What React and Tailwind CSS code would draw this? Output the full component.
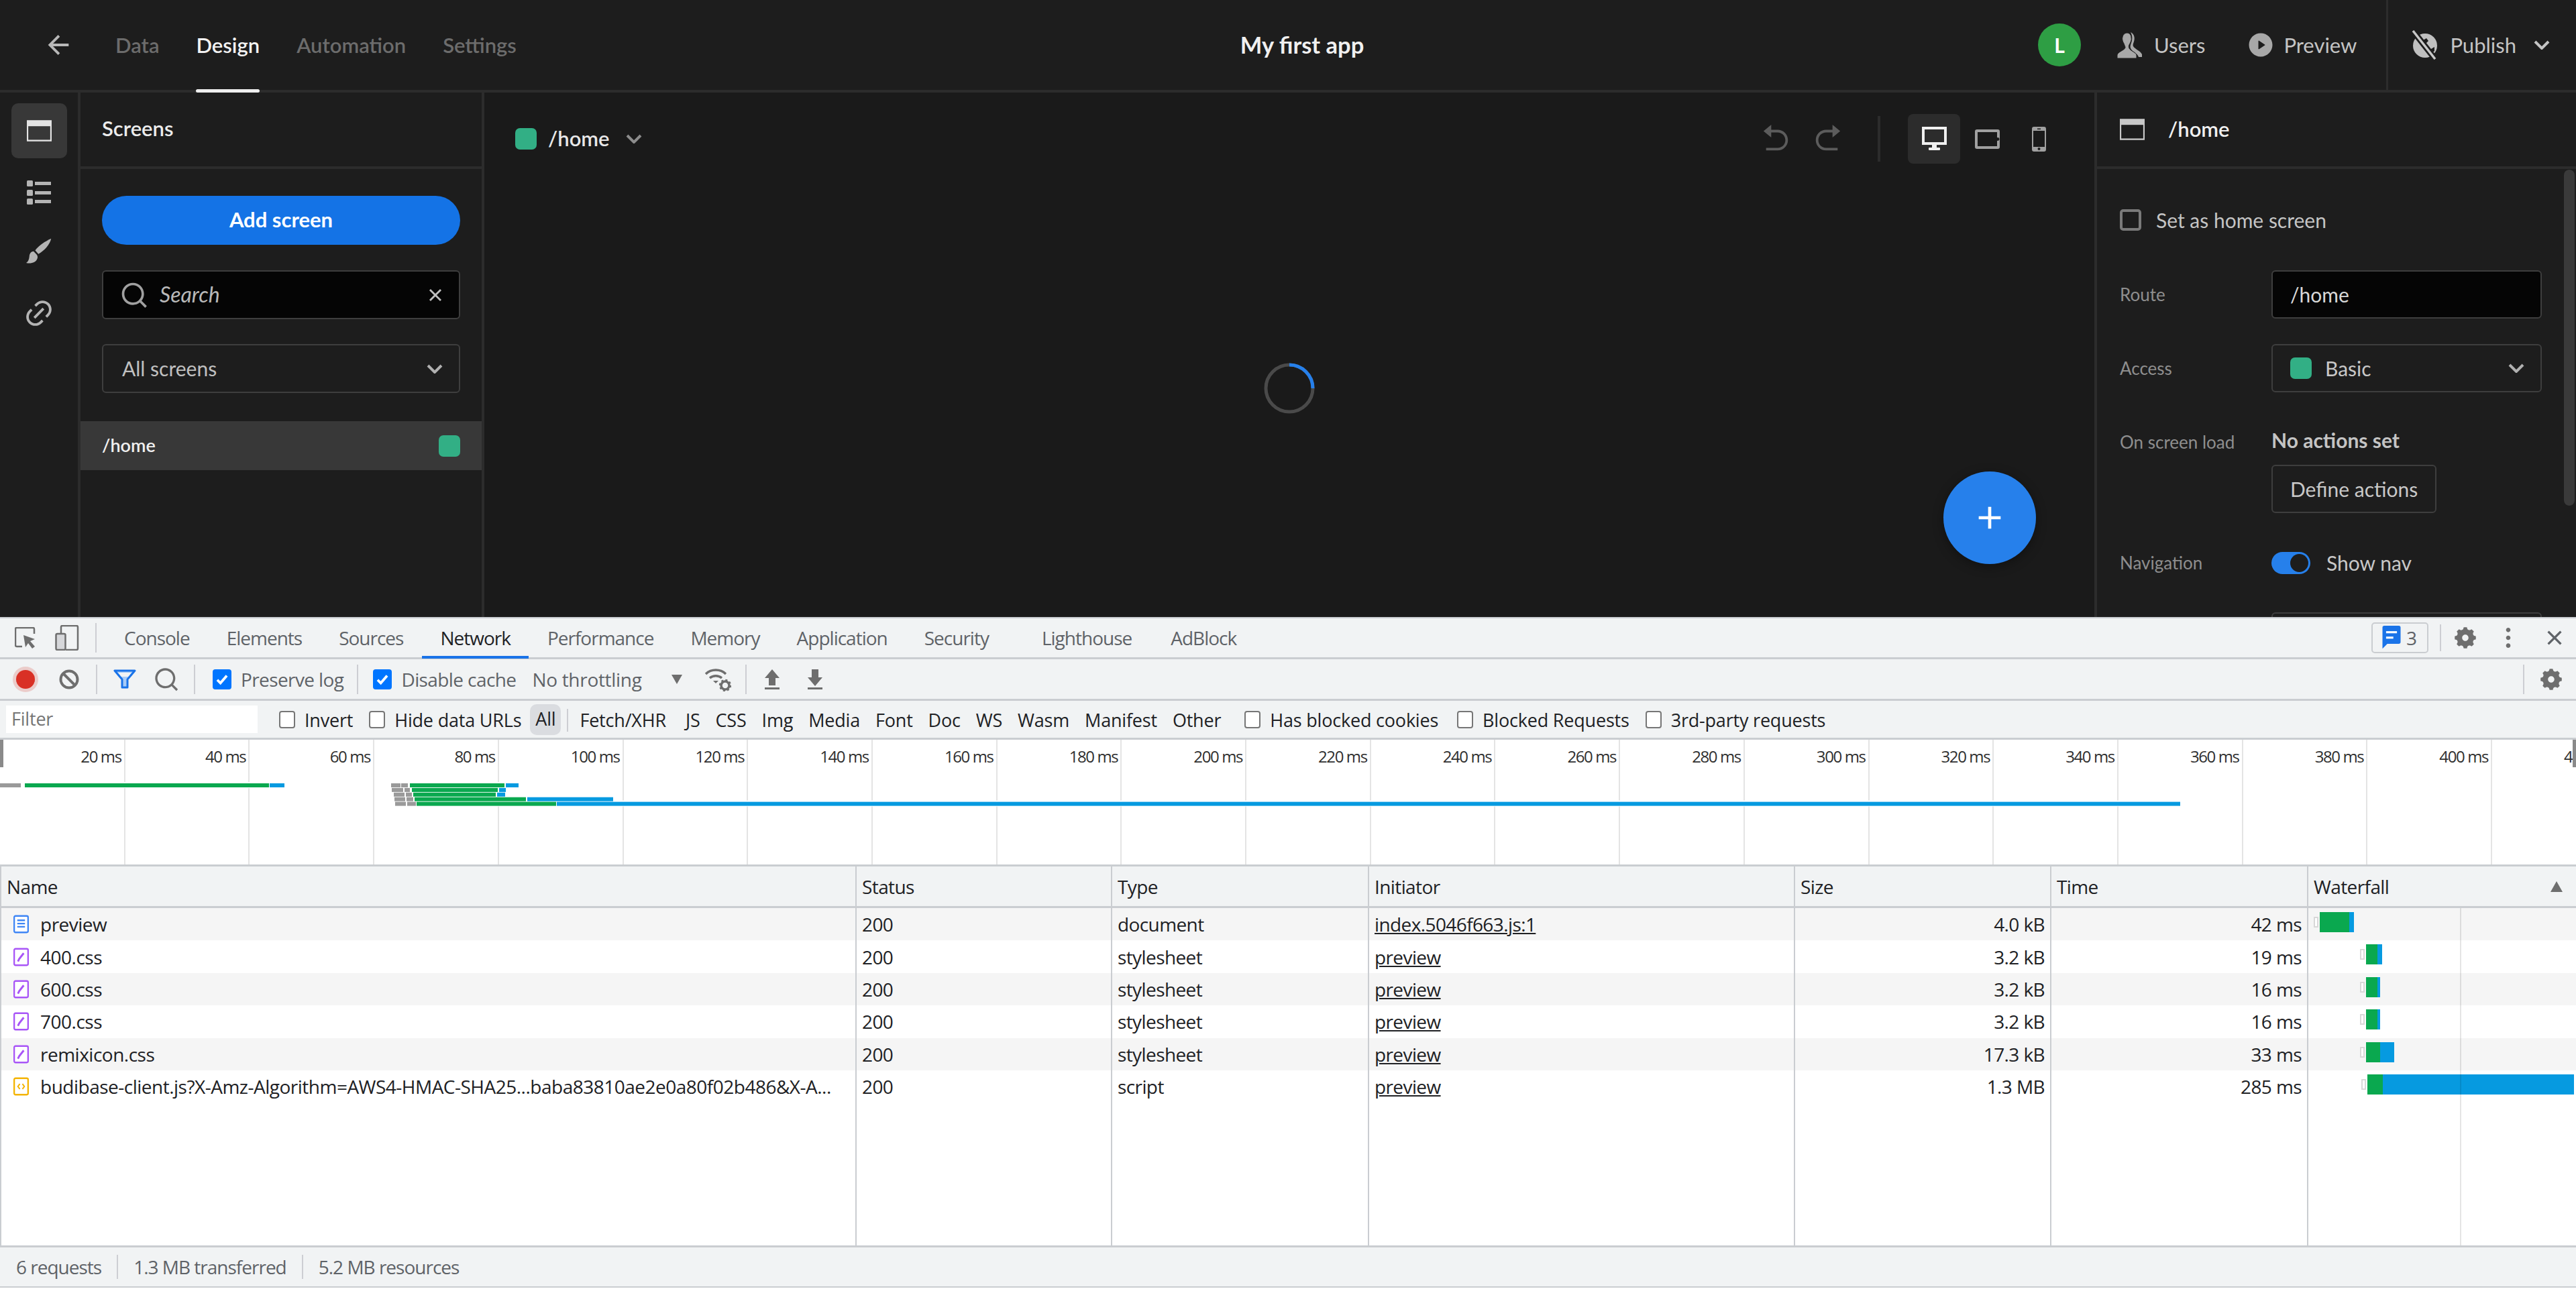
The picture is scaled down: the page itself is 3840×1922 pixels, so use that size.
import React from "react";
import {
  RiArrowLeftLine,
  RiLink,
  RiSearchLine,
  RiCloseFill,
  RiCloseLine,
  RiPlayCircleFill,
  RiArrowGoBackFill,
  RiArrowGoForwardFill,
  RiAddLine,
  RiSettings5Fill,
  RiMore2Fill,
} from "react-icons/ri";

const ticks = Array.from({ length: 21 }, (_, i) => (i + 1) * 20);

const rows = [
  { name: "preview", type: "document", initiator: "index.5046f663.js:1", size: "4.0 kB", time: "42 ms", kind: "doc", left: 17, green: 44, blue: 7 },
  { name: "400.css", type: "stylesheet", initiator: "preview", size: "3.2 kB", time: "19 ms", kind: "css", left: 86, green: 17, blue: 7 },
  { name: "600.css", type: "stylesheet", initiator: "preview", size: "3.2 kB", time: "16 ms", kind: "css", left: 86, green: 17, blue: 4 },
  { name: "700.css", type: "stylesheet", initiator: "preview", size: "3.2 kB", time: "16 ms", kind: "css", left: 86, green: 17, blue: 4 },
  { name: "remixicon.css", type: "stylesheet", initiator: "preview", size: "17.3 kB", time: "33 ms", kind: "css", left: 86, green: 21, blue: 21 },
  { name: "budibase-client.js?X-Amz-Algorithm=AWS4-HMAC-SHA25...baba83810ae2e0a80f02b486&X-A...", type: "script", initiator: "preview", size: "1.3 MB", time: "285 ms", kind: "js", left: 88, green: 23, blue: 285 },
];

const Dot = ({ className = "" }) => <div className={`w-[32px] h-[32px] bg-[#32af85] rounded-[7px] shrink-0 ${className}`} />;

const Chevron = ({ className = "", color = "#b0b0b0" }) => (
  <svg viewBox="0 0 24 14" className={`w-[24px] h-[14px] shrink-0 ${className}`} fill="none" stroke={color} strokeWidth="4">
    <path d="M2 2l10 10L22 2" />
  </svg>
);

const WindowIcon = ({ color, className = "" }) => (
  <svg viewBox="0 0 38 32" className={`w-[37px] h-[32px] shrink-0 ${className}`} fill="none">
    <rect x="1" y="1" width="36" height="30" stroke={color} strokeWidth="2.4" />
    <rect x="1" y="1" width="36" height="8" fill={color} />
  </svg>
);

const ListIcon = () => (
  <svg viewBox="0 0 36 36" className="w-[36px] h-[36px]" fill="#b4b4b4">
    <rect x="0" y="0" width="9" height="9" rx="1.5" />
    <rect x="12" y="2" width="24" height="5" />
    <rect x="0" y="14" width="9" height="9" rx="1.5" />
    <rect x="12" y="16" width="24" height="5" />
    <rect x="0" y="27" width="9" height="9" rx="1.5" />
    <rect x="12" y="29" width="24" height="5" />
  </svg>
);

const BrushIcon = () => (
  <svg viewBox="0 0 24 24" className="w-[38px] h-[38px]" fill="#b4b4b4">
    <path d="M23.5 0.5C22.5 6 17 12 11.5 15L8.5 11.5C12 7 18 3 23.5 0.5Z" />
    <path d="M7 12.5C4.2 12.7 3.2 15 3 17.2C2.8 20 1.8 22.4 0 23.4C4 24.4 9.4 23.4 10.6 19C11 17.4 10.5 16.2 10 15.6Z" />
  </svg>
);

const UsersIcon = () => (
  <svg viewBox="0 0 38 40" className="w-[38px] h-[40px] mr-[17px] shrink-0">
    <path d="M20 1c5 2 7 8 5 14-1 3-2 5-1 7 2 4 11 7 13 12v4h-5c-1-5-10-8-12-13-1-3 0-5 1-8 2-5 2-11-1-16z" fill="#a8a8a8" />
    <path d="M0 40v-5c1-5 11-7 12-11 0-2-1-3-2-6-2-3-3-7-2-10 1-4 4-6 7-6s6 3 6 7c1 3-1 7-2 9-2 3-2 5-1 7 2 4 10 6 11 10v5z" fill="#a8a8a8" stroke="#1d1d1d" strokeWidth="1" />
  </svg>
);

const PublishIcon = () => (
  <svg viewBox="0 0 40 44" className="w-[40px] h-[44px] mr-[18px] shrink-0">
    <circle cx="21" cy="23" r="18" fill="#c0c0c0" />
    <path d="M12 12l6 3 5-3 3 4-4 4-7-1zM30 28l5-3v6l-5 4z" fill="#1d1d1d" />
    <path d="M3 1L36 43" stroke="#1d1d1d" strokeWidth="9" />
    <path d="M3 1L36 43" stroke="#c8c8c8" strokeWidth="3.5" />
  </svg>
);

const Tab = ({ label, active }) => (
  <div className={`relative h-full flex items-center text-[31px] font-semibold ${active ? "text-[#f2f2f2]" : "text-[#6c6c6c]"}`}>
    {label}
    {active && <div className="absolute left-0 right-0 bottom-[-4px] h-[5px] bg-[#eeeeee] rounded-sm" />}
  </div>
);

const TopBar = () => (
  <div className="h-[138px] shrink-0 flex items-stretch border-b-[4px] border-[#2c2c2c] bg-[#1d1d1d]">
    <div className="w-[1741px] shrink-0 flex items-center pl-[64px]">
      <RiArrowLeftLine className="w-[46px] h-[46px] text-[#b8b8b8] mr-[62px]" />
      <div className="flex h-full gap-[55px]">
        <Tab label="Data" />
        <Tab label="Design" active />
        <Tab label="Automation" />
        <Tab label="Settings" />
      </div>
    </div>
    <div className="w-[400px] shrink-0 flex items-center justify-center text-[34.5px] font-bold text-[#f0f0f0]">My first app</div>
    <div className="flex-1 flex items-center justify-end">
      <div className="w-[64px] h-[64px] rounded-full bg-[#2e9e44] text-white text-[30px] font-bold flex items-center justify-center mr-[54px]">L</div>
      <UsersIcon />
      <span className="text-[31px] text-[#c4c4c4] mr-[62px]">Users</span>
      <RiPlayCircleFill className="w-[42px] h-[42px] text-[#a8a8a8] mr-[13px]" />
      <span className="text-[31px] text-[#c4c4c4] mr-[44px]">Preview</span>
      <div className="h-full w-[3px] bg-[#2c2c2c] mr-[34px]" />
      <PublishIcon />
      <span className="text-[31px] text-[#c4c4c4] mr-[26px]">Publish</span>
      <Chevron className="mr-[39px]" color="#c4c4c4" />
    </div>
  </div>
);

const IconRail = () => (
  <div className="w-[120px] shrink-0 border-r-[4px] border-[#2c2c2c] bg-[#1d1d1d] flex flex-col items-center pt-[16px]">
    <div className="w-[83px] h-[82px] rounded-[10px] bg-[#383838] flex items-center justify-center">
      <WindowIcon color="#e4e4e4" />
    </div>
    <div className="mt-[33px]"><ListIcon /></div>
    <div className="mt-[50px]"><BrushIcon /></div>
    <RiLink className="w-[46px] h-[46px] text-[#b4b4b4] mt-[51px]" />
  </div>
);

const ScreensPanel = () => (
  <div className="w-[602px] shrink-0 border-r-[4px] border-[#2c2c2c] bg-[#1d1d1d] flex flex-col">
    <div className="h-[114px] shrink-0 flex items-center px-[32px] pb-[3px] text-[31px] font-semibold text-[#ececec] border-b-[4px] border-[#2c2c2c]">Screens</div>
    <div className="px-[32px] pt-[40px] flex flex-col">
      <div className="h-[73px] pb-[2px] rounded-full bg-[#1473e6] text-white text-[31px] font-bold flex items-center justify-center">Add screen</div>
      <div className="h-[73px] mt-[38px] rounded-[6px] border-[2px] border-[#3e3e3e] bg-[#050505] flex items-center pl-[24px] pr-[18px]">
        <RiSearchLine className="w-[44px] h-[44px] text-[#a0a0a0] mr-[16px]" />
        <span className="flex-1 text-[32px] pb-[2px] italic text-[#b8b8b8]">Search</span>
        <RiCloseFill className="w-[34px] h-[34px] text-[#c0c0c0]" />
      </div>
      <div className="h-[73px] mt-[37px] rounded-[6px] border-[2px] border-[#3e3e3e] flex items-center justify-between pl-[28px] pr-[24px]">
        <span className="text-[30px] text-[#c0c0c0]">All screens</span>
        <Chevron />
      </div>
    </div>
    <div className="h-[73px] mt-[42px] bg-[#383838] flex items-center justify-between px-[32px]">
      <span className="text-[27px] font-semibold text-[#f0f0f0]">/home</span>
      <Dot />
    </div>
  </div>
);

const Canvas = () => (
  <div className="relative flex-1 bg-[#1a1a1a]">
    <div className="flex items-center justify-between pl-[46px] pr-[72px] pt-[32px]">
      <div className="flex items-center">
        <Dot />
        <span className="text-[31px] pb-[2px] text-[#e8e8e8] font-semibold ml-[17px] mr-[24px]">/home</span>
        <Chevron color="#8c8c8c" />
      </div>
      <div className="flex items-center h-[74px]">
        <RiArrowGoBackFill className="w-[46px] h-[46px] text-[#5c5c5c] mr-[30px]" />
        <RiArrowGoForwardFill className="w-[46px] h-[46px] text-[#5c5c5c] mr-[52px]" />
        <div className="w-[4px] h-[68px] bg-[#2c2c2c] mr-[41px]" />
        <div className="w-[78px] h-[74px] rounded-[8px] bg-[#2c2c2c] flex items-center justify-center">
          <svg viewBox="0 0 37 36" className="w-[37px] h-[36px]" fill="none">
            <rect x="2" y="2" width="33" height="23" stroke="#f0f0f0" strokeWidth="4" />
            <rect x="15" y="26" width="7" height="6" fill="#f0f0f0" />
            <rect x="10" y="31" width="17" height="4" rx="1" fill="#f0f0f0" />
          </svg>
        </div>
        <svg viewBox="0 0 37 29" className="w-[37px] h-[29px] ml-[22px]">
          <rect x="2" y="2" width="33" height="25" rx="1" fill="none" stroke="#a0a0a0" strokeWidth="4" />
          <circle cx="34" cy="14.5" r="2.4" fill="#1a1a1a" />
        </svg>
        <svg viewBox="0 0 21 37" className="w-[21px] h-[37px] ml-[48px]">
          <rect x="1" y="1" width="19" height="35" rx="2" fill="none" stroke="#a0a0a0" strokeWidth="2" />
          <rect x="1" y="1" width="19" height="5" fill="#a0a0a0" />
          <rect x="1" y="30" width="19" height="6" fill="#a0a0a0" />
          <circle cx="10.5" cy="33" r="2" fill="#1a1a1a" />
          <rect x="8" y="2.5" width="5" height="1.5" fill="#1a1a1a" />
        </svg>
      </div>
    </div>
    <div className="flex justify-center mt-[295px]">
      <svg viewBox="0 0 80 80" className="w-[80px] h-[80px]" fill="none" strokeWidth="5">
        <circle cx="40" cy="40" r="35" stroke="#4a4a4a" />
        <path d="M40 5a35 35 0 0 1 35 35" stroke="#2680eb" />
      </svg>
    </div>
    <div className="absolute left-[2175px] top-[565px] w-[138px] h-[138px] rounded-full bg-[#2680eb] flex items-center justify-center shadow-[0_4px_16px_rgba(0,0,0,0.35)]">
      <RiAddLine className="w-[56px] h-[56px] text-white" />
    </div>
  </div>
);

const FieldRow = ({ label, children, className = "" }) => (
  <div className={`flex items-center ${className}`}>
    <div className="w-[226px] shrink-0 text-[26px] text-[#8e8e8e]">{label}</div>
    {children}
  </div>
);

const PropsPanel = () => (
  <div className="relative w-[718px] shrink-0 border-l-[4px] border-[#2c2c2c] bg-[#1d1d1d] flex flex-col overflow-hidden">
    <div className="h-[114px] shrink-0 flex items-center px-[34px] border-b-[4px] border-[#2c2c2c]">
      <WindowIcon color="#c8c8c8" className="mr-[35px]" />
      <span className="text-[31px] pb-[2px] font-semibold text-[#f0f0f0]">/home</span>
    </div>
    <div className="pl-[34px] pr-[51px] pt-[48px] flex flex-col">
      <div className="flex items-center h-[56px]">
        <div className="w-[32px] h-[32px] rounded-[5px] border-[4px] border-[#7a7a7a] mr-[22px]" />
        <span className="text-[30px] text-[#c4c4c4]">Set as home screen</span>
      </div>
      <FieldRow label="Route" className="mt-[47px]">
        <div className="flex-1 h-[72px] rounded-[6px] border-[2px] border-[#3e3e3e] bg-[#050505] flex items-center px-[26px] text-[30px] text-[#d8d8d8]">/home</div>
      </FieldRow>
      <FieldRow label="Access" className="mt-[38px]">
        <div className="flex-1 h-[72px] rounded-[6px] border-[2px] border-[#3e3e3e] flex items-center pl-[26px] pr-[24px]">
          <Dot className="mr-[20px]" />
          <span className="flex-1 text-[30px] text-[#c8c8c8]">Basic</span>
          <Chevron />
        </div>
      </FieldRow>
      <div className="flex mt-[49px]">
        <div className="w-[226px] shrink-0 text-[26px] text-[#8e8e8e] pt-[6px]">On screen load</div>
        <div className="flex flex-col items-start">
          <span className="text-[30px] font-bold text-[#c4c4c4]">No actions set</span>
          <div className="mt-[14px] h-[72px] rounded-[6px] border-[2px] border-[#3e3e3e] flex items-center px-[26px] text-[30px] text-[#c8c8c8]">Define actions</div>
        </div>
      </div>
      <FieldRow label="Navigation" className="mt-[52px]">
        <div className="relative w-[58px] h-[33px] rounded-full bg-[#2680eb] mr-[24px]">
          <div className="absolute right-[3px] top-[3px] w-[27px] h-[27px] rounded-full bg-[#1d1d1d]" />
        </div>
        <span className="text-[30px] text-[#c8c8c8]">Show nav</span>
      </FieldRow>
      <div className="mt-[51px] h-[70px] rounded-[6px] border-[2px] border-[#3e3e3e] ml-[226px] shrink-0" />
    </div>
    <div className="absolute right-[2px] top-[115px] h-[501px] w-[16px] rounded-full bg-[#3a3a3a]" />
  </div>
);

const DevIcon = ({ children, w = 32, h = 40, className = "" }) => (
  <svg viewBox={`0 0 ${w} ${h}`} style={{ width: w, height: h }} className={`shrink-0 ${className}`}>
    {children}
  </svg>
);

const VBar = ({ className = "" }) => <div className={`w-[2px] h-[44px] bg-[#cdced3] shrink-0 ${className}`} />;

const DevTab = ({ label, active, className = "" }) => (
  <div className={`relative h-full flex items-center ${active ? "text-[#202124]" : "text-[#5f6368]"} ${className}`}>
    {label}
    {active && <div className="absolute left-[-27px] right-[-27px] bottom-[-2px] h-[4px] bg-[#1a73e8]" />}
  </div>
);

const Check = ({ checked, className = "" }) =>
  checked ? (
    <div className={`w-[28px] h-[30px] rounded-[4px] bg-[#0075ff] flex items-center justify-center shrink-0 ${className}`}>
      <svg viewBox="0 0 14 14" className="w-[22px] h-[22px]" fill="none" stroke="white" strokeWidth="2.4"><path d="M2.5 7.5l3 3 6-7" /></svg>
    </div>
  ) : (
    <div className={`w-[24px] h-[26px] rounded-[4px] border-[2px] border-[#767676] bg-white shrink-0 ${className}`} />
  );

const Gear = ({ className = "" }) => <RiSettings5Fill className={`w-[38px] h-[38px] text-[#6e6e6e] shrink-0 ${className}`} />;

const DevToolbar = () => (
  <div className="h-[61px] shrink-0 flex items-center bg-[#f1f3f4] border-b-[3px] border-[#cacdd1] text-[28px] tracking-[-1px] pl-[22px]">
    <DevIcon w={32} h={32}>
      <path d="M11 29H3q-2 0-2-2V3q0-2 2-2h24q2 0 2 2v7" fill="none" stroke="#6e6e6e" strokeWidth="2.5" />
      <path d="M13 12l17 6-7 3 7 8-4 3-6-8-4 6z" fill="#6e6e6e" />
    </DevIcon>
    <DevIcon w={36} h={38} className="ml-[28px]">
      <path d="M9 12V3q0-2 2-2h21q2 0 2 2v32q0 2-2 2H16" fill="none" stroke="#6e6e6e" strokeWidth="2.5" />
      <rect x="1.5" y="13" width="14" height="24" rx="2" fill="#d6d7da" stroke="#6e6e6e" strokeWidth="2.5" />
    </DevIcon>
    <VBar className="ml-[24px]" />
    <div className="flex h-full items-center gap-[55px] ml-[41px]">
      <DevTab label="Console" />
      <DevTab label="Elements" />
      <DevTab label="Sources" />
      <DevTab label="Network" active />
      <DevTab label="Performance" />
      <DevTab label="Memory" />
      <DevTab label="Application" />
      <DevTab label="Security" />
      <DevTab label="Lighthouse" className="ml-[24px]" />
      <DevTab label="AdBlock" className="ml-[3px]" />
    </div>
    <div className="flex-1" />
    <div className="h-[46px] w-[85px] rounded-[5px] border-[2px] border-[#cacdd1] flex items-center pl-[14px] text-[#5f6368]">
      <svg viewBox="0 0 30 40" className="w-[28px] h-[36px] mr-[8px]">
        <path d="M3 0h24q3 0 3 3v24q0 3-3 3H8l-8 8V3q0-3 3-3z" fill="#1a73e8" />
        <rect x="6" y="9" width="18" height="3.5" fill="#fff" />
        <rect x="6" y="18" width="12" height="3.5" fill="#fff" />
      </svg>
      3
    </div>
    <div className="w-[2px] h-[40px] bg-[#cdced3] mx-[17px]" />
    <Gear />
    <RiMore2Fill className="w-[40px] h-[40px] text-[#6e6e6e] ml-[25px]" />
    <RiCloseLine className="w-[40px] h-[40px] text-[#5f6368] ml-[29px] mr-[12px]" />
  </div>
);

const NetToolbar = () => (
  <div className="h-[62px] shrink-0 flex items-center bg-[#f1f3f4] border-b-[3px] border-[#cacdd1] text-[28px] tracking-[-0.6px] text-[#5f6368] pl-[24px]">
    <div className="w-[28px] h-[28px] rounded-full bg-[#d93025] shadow-[0_0_0_5px_rgba(217,48,37,0.2)]" />
    <DevIcon w={30} h={30} className="ml-[36px]">
      <circle cx="15" cy="15" r="12.5" fill="none" stroke="#6e6e6e" strokeWidth="4" />
      <path d="M7 7l16 16" stroke="#6e6e6e" strokeWidth="4" />
    </DevIcon>
    <VBar className="ml-[25px]" />
    <DevIcon w={34} h={30} className="ml-[24px]">
      <path d="M2 2h30L21 15v12h-8V15z" fill="#a9ccf7" stroke="#1a73e8" strokeWidth="3" strokeLinejoin="round" />
      <path d="M7 5h20l-5 6H12z" fill="#f1f3f4" />
    </DevIcon>
    <RiSearchLine className="w-[40px] h-[40px] text-[#6e6e6e] ml-[25px] shrink-0" />
    <VBar className="ml-[21px]" />
    <Check checked className="ml-[26px]" />
    <span className="ml-[14px]">Preserve log</span>
    <VBar className="ml-[20px]" />
    <Check checked className="ml-[22px]" />
    <span className="ml-[14px]">Disable cache</span>
    <span className="ml-[24px] tracking-[-0.3px]">No throttling</span>
    <div className="w-0 h-0 ml-[44px] border-l-[8px] border-r-[8px] border-t-[14px] border-l-transparent border-r-transparent border-t-[#6e6e6e]" />
    <DevIcon w={40} h={36} className="ml-[33px]">
      <path d="M2 10a22 22 0 0 1 30 0M8 16a14 14 0 0 1 18 0" fill="none" stroke="#6e6e6e" strokeWidth="3.5" />
      <path d="M13 20h8l-4 4z" fill="#6e6e6e" />
      <circle cx="31" cy="27" r="6" fill="none" stroke="#6e6e6e" strokeWidth="3.5" />
      <circle cx="31" cy="27" r="8" fill="none" stroke="#6e6e6e" strokeWidth="2.4" strokeDasharray="3 3.3" />
    </DevIcon>
    <VBar className="ml-[21px]" />
    <DevIcon w={26} h={32} className="ml-[25px]">
      <path d="M13 1l11 13h-6v11H8V14H2z M2 28h22v3H2z" fill="#6e6e6e" />
    </DevIcon>
    <DevIcon w={26} h={32} className="ml-[38px]">
      <path d="M13 26L2 13h6V1h10v12h6z M2 28h22v3H2z" fill="#6e6e6e" />
    </DevIcon>
    <div className="flex-1" />
    <VBar />
    <Gear className="ml-[21px] mr-[18px]" />
  </div>
);

const FilterBar = () => (
  <div className="h-[58px] shrink-0 flex items-center bg-[#f1f3f4] border-b-[3px] border-[#cacdd1] text-[27px] tracking-[-0.2px] text-[#202124] pl-[9px] pt-[3px]">
    <div className="w-[375px] h-[41px] -mt-[3px] bg-white flex items-center pl-[8px] text-[#757575] shrink-0">Filter</div>
    <Check className="ml-[32px] -mt-[3px]" />
    <span className="ml-[14px]">Invert</span>
    <Check className="ml-[24px] -mt-[3px]" />
    <span className="ml-[14px]">Hide data URLs</span>
    <div className="ml-[13px] px-[8px] h-[46px] -mt-[3px] rounded-[10px] bg-[#dadce0] flex items-center">All</div>
    <div className="w-[2px] h-[34px] bg-[#cdced3] ml-[9px]" />
    <div className="flex items-center gap-[23px] ml-[17px]">
      {["Fetch/XHR", "JS", "CSS", "Img", "Media", "Font", "Doc", "WS", "Wasm", "Manifest", "Other"].map((t) => (
        <span key={t} className={t === "JS" ? "ml-[6px]" : ""}>{t}</span>
      ))}
    </div>
    <Check className="ml-[35px] -mt-[3px]" />
    <span className="ml-[14px]">Has blocked cookies</span>
    <Check className="ml-[28px] -mt-[3px]" />
    <span className="ml-[14px]">Blocked Requests</span>
    <Check className="ml-[24px] -mt-[3px]" />
    <span className="ml-[14px]">3rd-party requests</span>
  </div>
);

// overview chart: [x, row, width, color], pixels
const overviewBars = [
  [0, 0, 31, "#9a9a9a"], [37, 0, 364, "#0aa84f"], [402, 0, 22, "#069ae0"],
  [583, 0, 14, "#9a9a9a"], [598, 0, 10, "#9a9a9a"], [611, 0, 141, "#0aa84f"], [754, 0, 19, "#069ae0"],
  [584, 1, 17, "#9a9a9a"], [603, 1, 8, "#9a9a9a"], [614, 1, 128, "#0aa84f"], [744, 1, 10, "#069ae0"],
  [587, 2, 16, "#9a9a9a"], [605, 2, 9, "#9a9a9a"], [616, 2, 123, "#0aa84f"], [741, 2, 12, "#069ae0"],
  [588, 3, 16, "#9a9a9a"], [606, 3, 10, "#9a9a9a"], [618, 3, 166, "#0aa84f"], [786, 3, 128, "#069ae0"],
  [589, 4, 16, "#9a9a9a"], [607, 4, 13, "#9a9a9a"], [621, 4, 208, "#0aa84f"], [830, 4, 2420, "#069ae0"],
];

const Overview = () => (
  <div className="relative h-[189px] shrink-0 bg-white border-b-[3px] border-[#cacdd1] overflow-hidden">
    {ticks.map((t, i) => (
      <div
        key={t}
        className="absolute top-0 bottom-0 w-[2px] bg-[#e4e4e4]"
        style={{ left: (i + 1) * 185.7 - 1 }}
      >
        <span className="absolute right-[6px] top-[7px] text-[24px] tracking-[-1.4px] text-[#303030] whitespace-nowrap">{t} ms</span>
      </div>
    ))}
    <div className="absolute left-0 top-0 w-[5px] h-[41px] bg-[#8a8a8a]" />
    <div className="absolute right-0 top-0 w-[5px] h-[41px] bg-[#8a8a8a]" />
    <svg className="absolute left-0 top-[60px] w-[3840px] h-[60px]" viewBox="0 0 3840 60">
      {overviewBars.map(([x, row, w], i) => (
        <rect key={i} x={x - 1} y={row * 6.9 + 3} width={w + 2} height={9} fill="#ffffff" />
      ))}
      {overviewBars.map(([x, row, w, c], i) => (
        <rect key={i} x={x} y={row * 6.9 + 5} width={w} height={6} fill={c} />
      ))}
    </svg>
  </div>
);

const cols = "grid grid-cols-[1273px_381px_383px_635px_382px_383px_1fr]";
const cell = "border-l-[2px] border-[#cacdd1] px-[8px] flex items-center overflow-hidden whitespace-nowrap";

const FileIcon = ({ kind }) => {
  const color = kind === "doc" ? "#3f86f5" : kind === "css" ? "#a855f7" : "#f4b400";
  return (
    <svg viewBox="0 0 24 28" className="w-[23px] h-[28px] mr-[17px] shrink-0">
      <rect x="1.2" y="1.2" width="21.6" height="25.6" rx="2" fill="#fff" stroke={color} strokeWidth="2.4" />
      {kind === "doc" && <path d="M6 8h12M6 13h12M6 18h12" stroke={color} strokeWidth="2.4" />}
      {kind === "css" && <path d="M7 21l2-4 7-9" stroke={color} strokeWidth="3" fill="none" />}
      {kind === "js" && <path d="M10 10l-3 4 3 4M14 10l3 4-3 4" stroke={color} strokeWidth="2" fill="none" />}
    </svg>
  );
};

const Table = () => (
  <div className="flex-1 flex flex-col bg-white min-h-0 relative text-[28px] tracking-[-0.6px] text-[#202124] border-l-[2px] border-[#cacdd1]">
    <div className={`${cols} h-[62px] shrink-0 bg-[#f1f3f4] border-b-[3px] border-[#cacdd1]`}>
      <div className="px-[8px] flex items-center">Name</div>
      {["Status", "Type", "Initiator", "Size", "Time"].map((h) => (
        <div key={h} className={cell}>{h}</div>
      ))}
      <div className={`${cell} justify-between pr-[20px]`}>
        Waterfall
        <div className="w-0 h-0 border-l-[9px] border-r-[9px] border-b-[16px] border-l-transparent border-r-transparent border-b-[#6e6e6e]" />
      </div>
    </div>
    <div className="flex-1 flex flex-col">
      {rows.map((r, i) => (
        <div key={r.name} className={`${cols} h-[48.4px] shrink-0 ${i % 2 === 0 ? "bg-[#f5f5f5]" : "bg-white"}`}>
          <div className="pl-[18px] pr-[8px] flex items-center overflow-hidden whitespace-nowrap">
            <FileIcon kind={r.kind} />
            <span className="tracking-[-0.5px]">{r.name}</span>
          </div>
          <div className={cell}>200</div>
          <div className={cell}>{r.type}</div>
          <div className={`${cell} underline`}>{r.initiator}</div>
          <div className={`${cell} justify-end`}>{r.size}</div>
          <div className={`${cell} justify-end`}>{r.time}</div>
          <div className="border-l-[2px] border-[#cacdd1] relative overflow-hidden">
            <div className="absolute top-[13px] h-[16px] w-[7px] border-[2px] border-[#d8d8d8] bg-white" style={{ left: r.left - 9 }} />
            <div className="absolute top-[6px] h-[30px] flex" style={{ left: r.left }}>
              <div className="bg-[#0aa84f]" style={{ width: r.green }} />
              <div className="bg-[#069ae0]" style={{ width: r.blue }} />
            </div>
          </div>
        </div>
      ))}
      <div className={`${cols} flex-1`}>
        {[0, 1, 2, 3, 4, 5].map((c) => <div key={c} className={c === 0 ? "" : "border-l-[2px] border-[#cacdd1]"} />)}
        <div className="border-l-[2px] border-[#cacdd1]" />
      </div>
    </div>
    <div className="absolute left-[3665px] top-[62px] bottom-0 w-[2px] bg-black/10" />
  </div>
);

const StatusBar = () => (
  <div className="h-[63px] shrink-0 mb-[2px] flex items-center bg-[#f1f3f4] border-t-[3px] border-b-[2px] border-[#cacdd1] text-[28px] tracking-[-1px] text-[#5f6368] pl-[24px]">
    <span>6 requests</span>
    <div className="w-[2px] h-[36px] bg-[#cdced3] mx-[23px]" />
    <span>1.3 MB transferred</span>
    <div className="w-[2px] h-[36px] bg-[#cdced3] mx-[23px]" />
    <span>5.2 MB resources</span>
  </div>
);

const App = () => {
  return (
    <div className="w-[3840px] h-[1922px] flex flex-col overflow-hidden bg-white">
      <div className="h-[920px] shrink-0 flex flex-col bg-[#1d1d1d] overflow-hidden font-['Lato','Noto_Sans',sans-serif]">
        <TopBar />
        <div className="flex-1 flex min-h-0">
          <IconRail />
          <ScreensPanel />
          <Canvas />
          <PropsPanel />
        </div>
      </div>
      <div className="flex-1 flex flex-col min-h-0 border-t-[2px] border-[#cacdd1] font-['Open_Sans','Noto_Sans',sans-serif]">
        <DevToolbar />
        <NetToolbar />
        <FilterBar />
        <Overview />
        <Table />
        <StatusBar />
      </div>
    </div>
  );
};

export default App;
